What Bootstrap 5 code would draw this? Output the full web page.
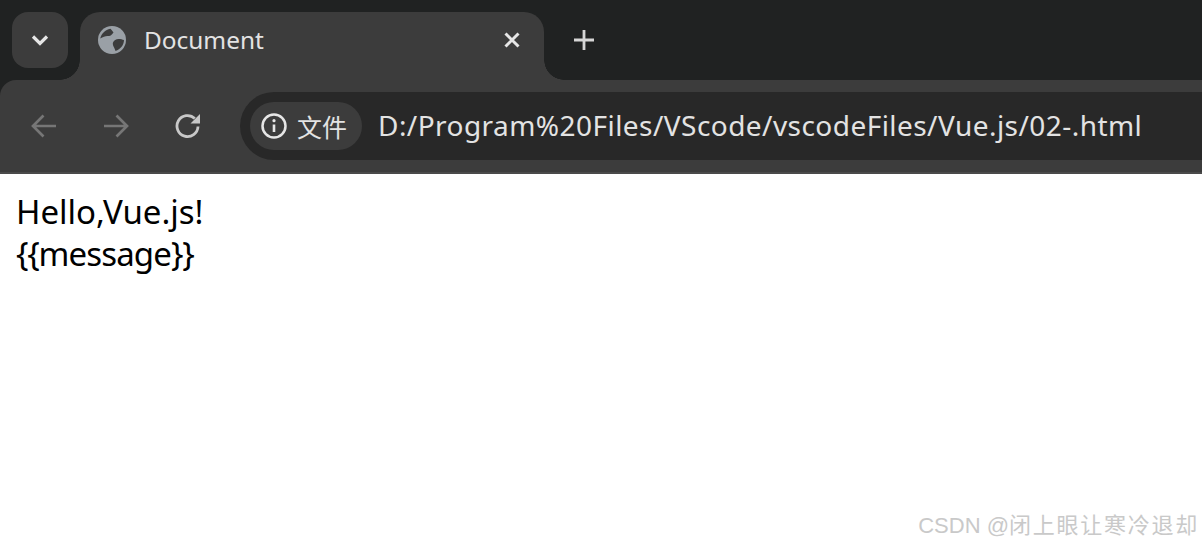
<!DOCTYPE html>
<html lang="zh">
<head>
<meta charset="utf-8">
<title>Document</title>
<link href="https://cdn.jsdelivr.net/npm/bootstrap@5.3.0/dist/css/bootstrap.min.css" rel="stylesheet">
<style>
html, body { height: 100%; }
body { background: #fff; font-family: "Noto Sans", "Noto Sans CJK SC", sans-serif; overflow: hidden; }
.strip { height: 80px; background: #202222; padding: 12px 0 0 12px; }
.tabs-btn { width: 56px; height: 56px; background: #3c3c3c; border-radius: 16px; margin-right: 12px; }
.tab-shape { width: 464px; height: 68px; background: #3c3c3c; border-radius: 20px 20px 0 0; padding: 0 18px 12px; }
.tab-shape::before, .tab-shape::after { content: ""; position: absolute; bottom: 0; width: 20px; height: 20px; }
.tab-shape::before { left: -20px; background: radial-gradient(circle at 0 0, transparent 19.5px, #3c3c3c 20px); }
.tab-shape::after { right: -20px; background: radial-gradient(circle at 100% 0, transparent 19.5px, #3c3c3c 20px); }
.tab-title { color: #e3e3e3; font-size: 24.4px; margin-left: 18px; line-height: 1; }
.plus-btn { margin-left: 29px; height: 56px; }
.bar-wrap { background: #202222; }
.bar { height: 94px; background: #3c3c3c; border-top-left-radius: 16px; border-bottom: 2px solid #4a4a4a; padding: 12px 0 12px 8px; }
.nav-ico { width: 72px; height: 68px; }
.omni { height: 68px; background: #282828; border-radius: 34px 0 0 34px; padding-left: 10px; margin-left: 16px; }
.chip { height: 48px; width: 112px; background: #3c3c3c; border-radius: 24px; padding-left: 10px; color: #e3e3e3; font-size: 25px; }
.chip-text { margin-left: 9px; line-height: 1; font-family: "Noto Sans CJK SC", sans-serif; }
.url { color: #e3e3e3; font-size: 28px; letter-spacing: .45px; margin-left: 16px; line-height: 1; white-space: nowrap; padding-bottom: 2px; }
.page-text { padding: 17px 16px 0; font-size: 33px; line-height: 42px; color: #000; }
.brace { letter-spacing: -1.3px; }
.word { letter-spacing: -.85px; }
.mark-text { position: absolute; right: 3px; bottom: 7px; font-size: 22px; line-height: 1; color: #c9c9c9; font-family: "Liberation Sans", "Noto Sans CJK SC", sans-serif; }
.mark-cjk { letter-spacing: 1.75px; }
</style>
</head>
<body class="position-relative">
<header>
  <div class="strip d-flex align-items-start">
    <div class="tabs-btn d-flex align-items-center justify-content-center">
      <svg width="20" height="14" viewBox="0 0 20 14" fill="none"><path d="M3 3.500 10 10.500 17 3.500" stroke="#e6e6e6" stroke-width="3.200"/></svg>
    </div>
    <div class="tab-shape position-relative d-flex align-items-center">
      <svg width="28" height="28" viewBox="0 0 28 28" class="flex-shrink-0">
        <circle cx="14" cy="14" r="14" fill="#9aa0a6"/>
        <path d="M2.200 12.500C3.500 7.500 7 4 12.500 2.800 13.500 4 14.500 5 15.500 6.500 13.500 9.500 12 10 9.500 10 7 10 5 11 2.200 12.500ZM26 14C26 19 22.500 23 17.500 25 17 22.500 14 19 15 16.500 16 14.500 18 13 20.500 13 22.500 13 24.500 13.500 26 14Z" fill="#3c3c3c"/>
      </svg>
      <span class="tab-title flex-grow-1">Document</span>
      <svg width="18" height="18" viewBox="0 0 18 18" style="margin-right:5px"><path d="M2.500 2.500 15.500 15.500M15.500 2.500 2.500 15.500" stroke="#e6e6e6" stroke-width="3"/></svg>
    </div>
    <div class="plus-btn d-flex align-items-center">
      <svg width="22" height="22" viewBox="0 0 22 22"><path d="M11 1V21M1 11H21" stroke="#d6d6d6" stroke-width="2.800"/></svg>
    </div>
  </div>
  <div class="bar-wrap">
    <div class="bar d-flex align-items-center">
      <div class="nav-ico d-flex align-items-center justify-content-center">
        <svg width="26" height="26" viewBox="0 0 26 26" fill="none"><path d="M25 13H2M12.500 2.500 2 13 12.500 23.500" stroke="#767676" stroke-width="2.700"/></svg>
      </div>
      <div class="nav-ico d-flex align-items-center justify-content-center">
        <svg width="26" height="26" viewBox="0 0 26 26" fill="none"><path d="M1 13H24M13.500 2.500 24 13 13.500 23.500" stroke="#767676" stroke-width="2.700"/></svg>
      </div>
      <div class="nav-ico d-flex align-items-center justify-content-center">
        <svg width="26" height="26" viewBox="0 0 26 26" fill="none"><path d="M23 13.500A10.500 10.500 0 1 1 19.800 5.500" stroke="#c8c8c8" stroke-width="2.800"/><path d="M25 1V10.500H15.500Z" fill="#c8c8c8"/></svg>
      </div>
      <div class="omni flex-grow-1 d-flex align-items-center">
        <div class="chip d-flex align-items-center flex-shrink-0">
          <svg width="28" height="28" viewBox="0 0 28 28" fill="none" class="flex-shrink-0"><circle cx="14" cy="14" r="11.500" stroke="#e6e6e6" stroke-width="2.500"/><path d="M14 12.500V20" stroke="#e6e6e6" stroke-width="2.600"/><circle cx="14" cy="8.700" r="1.600" fill="#e6e6e6"/></svg>
          <span class="chip-text">文件</span>
        </div>
        <span class="url">D:/Program%20Files/VScode/vscodeFiles/Vue.js/02-.html</span>
      </div>
    </div>
  </div>
</header>
<main class="page-text">Hello,Vue.js!<br><span class="brace">{{</span><span class="word">message</span><span class="brace">}}</span></main>
<div class="mark-text">CSDN @<span class="mark-cjk">闭上眼让寒冷退却</span></div>
<script src="https://cdn.jsdelivr.net/npm/bootstrap@5.3.0/dist/js/bootstrap.bundle.min.js"></script>
</body>
</html>
